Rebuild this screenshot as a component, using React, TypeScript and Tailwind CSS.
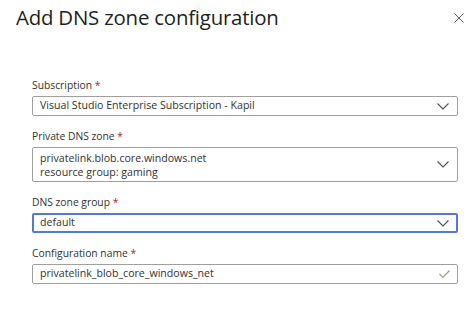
import React from "react";

const Chevron = () => (
  <svg width="12" height="7" viewBox="0 0 12 7" fill="none">
    <path d="M0.5 0.5 L6 6 L11.5 0.5" stroke="#505050" strokeWidth="1.1" />
  </svg>
);

const Check = () => (
  <svg width="11" height="8" viewBox="0 0 11 8" fill="none">
    <path d="M0.5 4 L4 7.3 L10.5 0.5" stroke="#8aa06a" strokeWidth="1.1" />
  </svg>
);

function Label({ text }: { text: string }) {
  return (
    <div className="text-[10.3px] leading-[14px] text-[#323130] mb-[4px]">
      {text} <span className="text-[#a4262c]">*</span>
    </div>
  );
}

export default function App() {
  return (
    <div
      className="w-[474px] h-[322px] bg-white overflow-hidden relative"
      style={{ fontFamily: '"Open Sans", "Noto Sans", sans-serif' }}
    >
      <div className="flex items-start justify-between pl-[16px] pr-[10px] pt-[3px]">
        <h1 className="text-[20.4px] leading-[28px] text-[#201f1e] tracking-[-0.2px]">
          Add DNS zone configuration
        </h1>
        <div className="mt-[10px]">
          <svg width="10" height="10" viewBox="0 0 10 10">
            <path d="M0.5 0.5 L9.5 9.5 M9.5 0.5 L0.5 9.5" stroke="#605e5c" strokeWidth="1" />
          </svg>
        </div>
      </div>

      <div className="pl-[32px] pr-[16px] pt-[47px] flex flex-col text-[10.6px] text-[#323130]">
        <Label text="Subscription" />
        <div className="h-[20px] border border-[#a19f9d] rounded-[2px] flex items-center justify-between pl-[7px] pr-[8px]">
          <span>Visual Studio Enterprise Subscription - Kapil</span>
          <Chevron />
        </div>

        <div className="mt-[13px]">
          <Label text="Private DNS zone" />
        </div>
        <div className="h-[35px] border border-[#a19f9d] rounded-[2px] flex items-center justify-between pl-[7px] pr-[8px]">
          <div className="leading-[14px]">
            <div>privatelink.blob.core.windows.net</div>
            <div>resource group: gaming</div>
          </div>
          <Chevron />
        </div>

        <div className="mt-[13px]">
          <Label text="DNS zone group" />
        </div>
        <div className="h-[20px] border-2 border-[#4f7bd0] rounded-[2px] flex items-center justify-between pl-[6px] pr-[7px]">
          <span>default</span>
          <Chevron />
        </div>

        <div className="mt-[13px]">
          <Label text="Configuration name" />
        </div>
        <div className="h-[20px] border border-[#a19f9d] rounded-[2px] flex items-center justify-between pl-[7px] pr-[7px]">
          <span>privatelink_blob_core_windows_net</span>
          <Check />
        </div>
      </div>
    </div>
  );
}
